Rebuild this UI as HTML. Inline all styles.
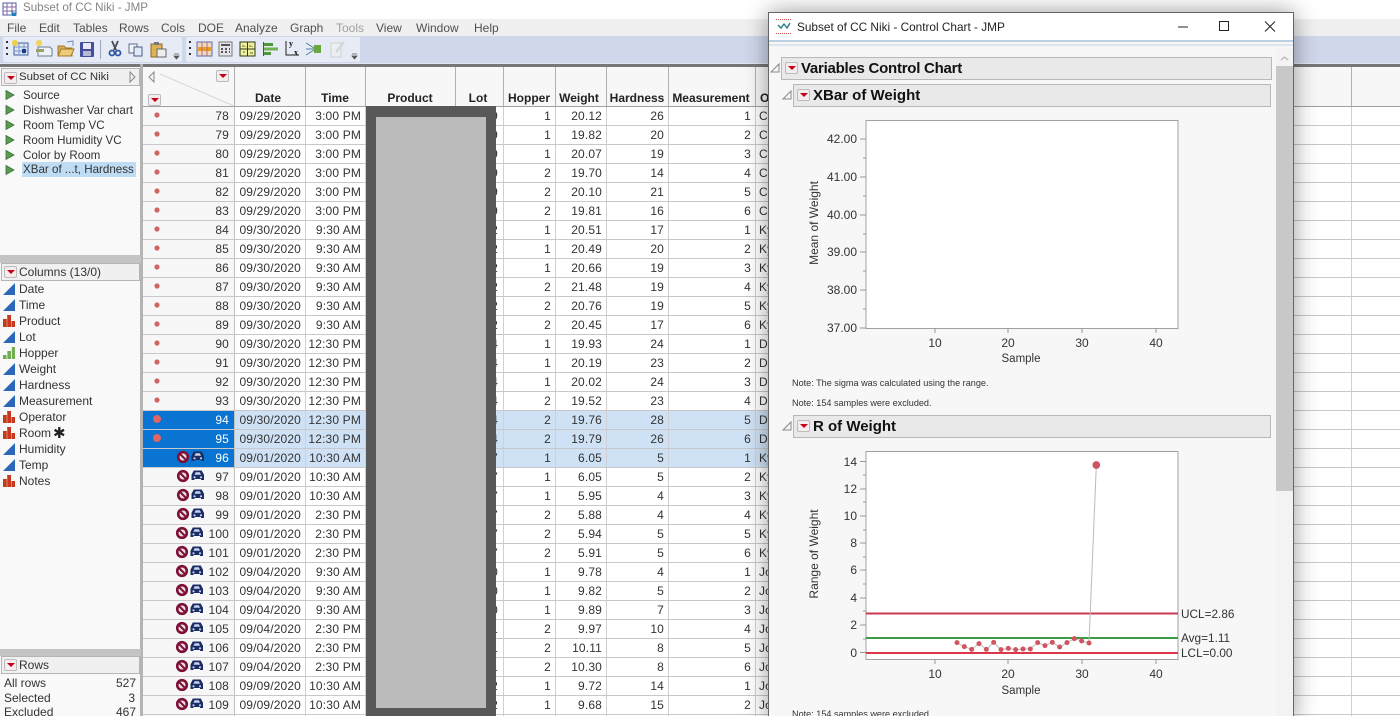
<!DOCTYPE html>
<html><head><meta charset="utf-8"><title>Subset of CC Niki - JMP</title>
<style>
*{box-sizing:border-box;margin:0;padding:0}
html,body{width:1400px;height:716px;overflow:hidden;background:#fff;font-family:"Liberation Sans",sans-serif;font-size:12px;color:#333}
#page{position:relative;width:1400px;height:716px;overflow:hidden;background:#fff}
.a{position:absolute;white-space:nowrap}
#menu{left:0;top:19px;width:1400px;height:17px;background:#f0f0f0}
#menu span{position:absolute;top:2px;color:#505050;font-size:12px}
#tb{left:0;top:36px;width:1400px;height:28px;background:#cfd7ea;border-bottom:1px solid #e4e8f2}
#dk{left:0;top:64px;width:1400px;height:3px;background:#777}
#left{left:0;top:67px;width:141px;height:649px;background:#f9f9f9}
#gap{left:140px;top:64px;width:3px;height:652px;background:#b4b4b4}
.sep{left:0;width:141px;background:#c4c4c4}
.hd{left:1px;width:139px;height:18px;background:#f0f0f0;border:1px solid #b5b5b5;padding:1px 0 0 17px;line-height:15px;color:#333}
.m{position:absolute;width:13px;height:12px;background:#f5eded;border:1px solid #bbb;border-radius:2px}
.m:after{content:"";position:absolute;left:1.500px;top:3px;border:4px solid transparent;border-top:4.500px solid #c40018;border-bottom:0}
.li{left:23px;color:#333;line-height:15px;font-size:11.600px}
.co{left:19px;color:#333;line-height:15px}
#head{left:143px;top:67px;width:1257px;height:40px;background:#f7f7f7;border-bottom:1px solid #a0a0a0}
#head i{position:absolute;top:0;width:1px;height:39px;background:#b0b0b0}
#head b{position:absolute;top:24px;font-size:12px;color:#222;transform:translateX(-50%);white-space:nowrap}
#rows{left:143px;top:107px;width:1257px;height:609px;overflow:hidden}
.r{display:flex;height:19px;border-bottom:1px solid #c8c8cc;background:#fff;line-height:18px;letter-spacing:.15px}
.r span{display:block;height:18px;border-right:1px solid #d0d0d4;text-align:right;padding-right:4px;overflow:hidden;white-space:nowrap;flex:none}
.r span:nth-child(1){width:92px;background:#f7f7f7;padding-right:5px;border-right-color:#c0c0c0}
.r span:nth-child(2){width:71px}
.r span:nth-child(3){width:60px}
.r span:nth-child(4){width:90px}
.r span:nth-child(5){width:48px;padding-right:5px}
.r span:nth-child(6){width:52px}
.r span:nth-child(7){width:51px}
.r span:nth-child(8){width:62px}
.r span:nth-child(9){width:87px}
.r span:nth-child(10){width:596px;text-align:left;padding-left:3px}
.r.s span{background:#cfe2f5}
.r.s span:nth-child(1){background:#0a74d2;color:#fff}
.r.s span:nth-child(10){background:linear-gradient(to right,#cfe2f5 0,#cfe2f5 30px,#fff 30px)}
#bx1{left:366px;top:106px;width:130px;height:610px;background:#585858}
#bx2{left:376px;top:117px;width:110px;height:591px;background:#bbb}
#win{left:768px;top:12px;width:526px;height:710px;background:#f7f7f7;border:1px solid #666;box-shadow:0 0 22px rgba(0,0,0,.4)}
#tit{left:0;top:0;width:524px;height:29px;background:#fff;border-bottom:2px solid #bcd0e2}
#tl{left:0;top:31px;width:524px;height:2px;background:#dce6ef}
.ob{background:#e9e9e9;border:1px solid #b8b8b8;height:23px;font-weight:bold;font-size:15px;color:#111;line-height:21px}
#tk text{font-size:12px;fill:#333}
</style></head><body>
<div id="page">
<div class="a" style="left:23px;top:1px;color:#858585;font-size:11.600px">Subset of CC Niki - JMP</div>
<div class="a" id="menu"><span style="left:7px">File</span><span style="left:39px">Edit</span><span style="left:73px">Tables</span><span style="left:119px">Rows</span><span style="left:161px">Cols</span><span style="left:198px">DOE</span><span style="left:235px">Analyze</span><span style="left:290px">Graph</span><span style="left:336px;color:#a0a0a0">Tools</span><span style="left:376px">View</span><span style="left:416px">Window</span><span style="left:474px">Help</span></div>
<div class="a" id="tb"></div>
<div class="a" id="dk"></div>
<div class="a" id="left"></div>
<div class="a" id="gap"></div>
<div class="a sep" style="top:255px;height:8px"></div>
<div class="a sep" style="top:649px;height:7px"></div>

<div class="a hd" style="top:68px;font-size:11.400px">Subset of CC Niki<span class="m" style="left:2px;top:3px"></span></div>
<div class="a li" style="top:88px">Source</div>
<div class="a li" style="top:103px">Dishwasher Var chart</div>
<div class="a li" style="top:118px">Room Temp VC</div>
<div class="a li" style="top:133px">Room Humidity VC</div>
<div class="a li" style="top:148px">Color by Room</div>
<div class="a li" style="top:162px;left:22px;width:114px;padding-left:1px;background:#bfdcf5">XBar of ...t, Hardness</div>

<div class="a hd" style="top:263px">Columns (13/0)<span class="m" style="left:2px;top:2px"></span></div>
<div class="a co" style="top:282px">Date</div>
<div class="a co" style="top:298px">Time</div>
<div class="a co" style="top:314px">Product</div>
<div class="a co" style="top:330px">Lot</div>
<div class="a co" style="top:346px">Hopper</div>
<div class="a co" style="top:362px">Weight</div>
<div class="a co" style="top:378px">Hardness</div>
<div class="a co" style="top:394px">Measurement</div>
<div class="a co" style="top:410px">Operator</div>
<div class="a co" style="top:426px">Room</div>
<div class="a co" style="top:442px">Humidity</div>
<div class="a co" style="top:458px">Temp</div>
<div class="a co" style="top:474px">Notes</div>
<div class="a" style="left:53px;top:425px;font-size:15px;font-weight:bold;color:#222;line-height:17px;font-family:'DejaVu Sans',sans-serif">✱</div>

<div class="a hd" style="top:656px">Rows<span class="m" style="left:2px;top:2px"></span></div>
<div class="a" style="left:4px;top:676px;color:#333">All rows</div><div class="a" style="right:1264px;top:676px;color:#333">527</div>
<div class="a" style="left:4px;top:691px;color:#333">Selected</div><div class="a" style="right:1265px;top:691px;color:#333">3</div>
<div class="a" style="left:4px;top:705px;color:#333">Excluded</div><div class="a" style="right:1264px;top:705px;color:#333">467</div>

<div class="a" id="head">
<i style="left:91px"></i><i style="left:162px"></i><i style="left:222px"></i><i style="left:312px"></i><i style="left:360px"></i><i style="left:412px"></i><i style="left:463px"></i><i style="left:525px"></i><i style="left:612px"></i><i style="left:1208px"></i>
<b style="left:125px">Date</b><b style="left:192px">Time</b><b style="left:267px">Product</b><b style="left:335px">Lot</b><b style="left:386px">Hopper</b><b style="left:436px">Weight</b><b style="left:494px">Hardness</b><b style="left:568px">Measurement</b><b style="left:617px;transform:none">Operator</b>
<span class="m" style="left:73px;top:3px"></span><span class="m" style="left:5px;top:27px"></span>
</div>

<div class="a" id="rows">
<div class="r"><span>78</span><span>09/29/2020</span><span>3:00 PM</span><span></span><span>9</span><span>1</span><span>20.12</span><span>26</span><span>1</span><span>Ca</span></div>
<div class="r"><span>79</span><span>09/29/2020</span><span>3:00 PM</span><span></span><span>9</span><span>1</span><span>19.82</span><span>20</span><span>2</span><span>Ca</span></div>
<div class="r"><span>80</span><span>09/29/2020</span><span>3:00 PM</span><span></span><span>9</span><span>1</span><span>20.07</span><span>19</span><span>3</span><span>Ca</span></div>
<div class="r"><span>81</span><span>09/29/2020</span><span>3:00 PM</span><span></span><span>9</span><span>2</span><span>19.70</span><span>14</span><span>4</span><span>Ca</span></div>
<div class="r"><span>82</span><span>09/29/2020</span><span>3:00 PM</span><span></span><span>9</span><span>2</span><span>20.10</span><span>21</span><span>5</span><span>Ca</span></div>
<div class="r"><span>83</span><span>09/29/2020</span><span>3:00 PM</span><span></span><span>9</span><span>2</span><span>19.81</span><span>16</span><span>6</span><span>Ca</span></div>
<div class="r"><span>84</span><span>09/30/2020</span><span>9:30 AM</span><span></span><span>2</span><span>1</span><span>20.51</span><span>17</span><span>1</span><span>Ky</span></div>
<div class="r"><span>85</span><span>09/30/2020</span><span>9:30 AM</span><span></span><span>2</span><span>1</span><span>20.49</span><span>20</span><span>2</span><span>Ky</span></div>
<div class="r"><span>86</span><span>09/30/2020</span><span>9:30 AM</span><span></span><span>2</span><span>1</span><span>20.66</span><span>19</span><span>3</span><span>Ky</span></div>
<div class="r"><span>87</span><span>09/30/2020</span><span>9:30 AM</span><span></span><span>2</span><span>2</span><span>21.48</span><span>19</span><span>4</span><span>Ky</span></div>
<div class="r"><span>88</span><span>09/30/2020</span><span>9:30 AM</span><span></span><span>2</span><span>2</span><span>20.76</span><span>19</span><span>5</span><span>Ky</span></div>
<div class="r"><span>89</span><span>09/30/2020</span><span>9:30 AM</span><span></span><span>2</span><span>2</span><span>20.45</span><span>17</span><span>6</span><span>Ky</span></div>
<div class="r"><span>90</span><span>09/30/2020</span><span>12:30 PM</span><span></span><span>4</span><span>1</span><span>19.93</span><span>24</span><span>1</span><span>Da</span></div>
<div class="r"><span>91</span><span>09/30/2020</span><span>12:30 PM</span><span></span><span>4</span><span>1</span><span>20.19</span><span>23</span><span>2</span><span>Da</span></div>
<div class="r"><span>92</span><span>09/30/2020</span><span>12:30 PM</span><span></span><span>4</span><span>1</span><span>20.02</span><span>24</span><span>3</span><span>Da</span></div>
<div class="r"><span>93</span><span>09/30/2020</span><span>12:30 PM</span><span></span><span>4</span><span>2</span><span>19.52</span><span>23</span><span>4</span><span>Da</span></div>
<div class="r s"><span>94</span><span>09/30/2020</span><span>12:30 PM</span><span></span><span>4</span><span>2</span><span>19.76</span><span>28</span><span>5</span><span>Da</span></div>
<div class="r s"><span>95</span><span>09/30/2020</span><span>12:30 PM</span><span></span><span>4</span><span>2</span><span>19.79</span><span>26</span><span>6</span><span>Da</span></div>
<div class="r s"><span>96</span><span>09/01/2020</span><span>10:30 AM</span><span></span><span>7</span><span>1</span><span>6.05</span><span>5</span><span>1</span><span>Ky</span></div>
<div class="r"><span>97</span><span>09/01/2020</span><span>10:30 AM</span><span></span><span>7</span><span>1</span><span>6.05</span><span>5</span><span>2</span><span>Ky</span></div>
<div class="r"><span>98</span><span>09/01/2020</span><span>10:30 AM</span><span></span><span>7</span><span>1</span><span>5.95</span><span>4</span><span>3</span><span>Ky</span></div>
<div class="r"><span>99</span><span>09/01/2020</span><span>2:30 PM</span><span></span><span>7</span><span>2</span><span>5.88</span><span>4</span><span>4</span><span>Ky</span></div>
<div class="r"><span>100</span><span>09/01/2020</span><span>2:30 PM</span><span></span><span>7</span><span>2</span><span>5.94</span><span>5</span><span>5</span><span>Ky</span></div>
<div class="r"><span>101</span><span>09/01/2020</span><span>2:30 PM</span><span></span><span>7</span><span>2</span><span>5.91</span><span>5</span><span>6</span><span>Ky</span></div>
<div class="r"><span>102</span><span>09/04/2020</span><span>9:30 AM</span><span></span><span>0</span><span>1</span><span>9.78</span><span>4</span><span>1</span><span>Jo</span></div>
<div class="r"><span>103</span><span>09/04/2020</span><span>9:30 AM</span><span></span><span>0</span><span>1</span><span>9.82</span><span>5</span><span>2</span><span>Jo</span></div>
<div class="r"><span>104</span><span>09/04/2020</span><span>9:30 AM</span><span></span><span>0</span><span>1</span><span>9.89</span><span>7</span><span>3</span><span>Jo</span></div>
<div class="r"><span>105</span><span>09/04/2020</span><span>2:30 PM</span><span></span><span>1</span><span>2</span><span>9.97</span><span>10</span><span>4</span><span>Jo</span></div>
<div class="r"><span>106</span><span>09/04/2020</span><span>2:30 PM</span><span></span><span>1</span><span>2</span><span>10.11</span><span>8</span><span>5</span><span>Jo</span></div>
<div class="r"><span>107</span><span>09/04/2020</span><span>2:30 PM</span><span></span><span>1</span><span>2</span><span>10.30</span><span>8</span><span>6</span><span>Jo</span></div>
<div class="r"><span>108</span><span>09/09/2020</span><span>10:30 AM</span><span></span><span>2</span><span>1</span><span>9.72</span><span>14</span><span>1</span><span>Jo</span></div>
<div class="r"><span>109</span><span>09/09/2020</span><span>10:30 AM</span><span></span><span>2</span><span>1</span><span>9.68</span><span>15</span><span>2</span><span>Jo</span></div>
<div class="r"><span></span><span></span><span></span><span></span><span></span><span></span><span></span><span></span><span></span><span></span></div>
</div>
<div class="a" id="bx1"></div><div class="a" id="bx2"></div>

<svg class="a" style="left:0;top:0" width="1400" height="716" viewBox="0 0 1400 716">
<defs>
<g id="c"><path d="M0 12L12 0V12Z" fill="#2c66b8"/></g>
<g id="n"><path d="M0 4H3.800V12H0ZM4.200 0H8V12H4.200ZM8.400 6H12V12H8.400Z" fill="#c63a1c"/></g>
<g id="o"><path d="M0 8H3.600V12H0ZM4.400 4H8V12H4.400ZM8.800 0H12V12H8.800Z" fill="#6fae52"/></g>
<path id="g" d="M0 0L8 4.500L0 9Z" fill="#5c9a4e" stroke="#35703a" stroke-width=".8"/>
<g id="x"><circle r="4.800" fill="#ecdfe3" stroke="#7c1036" stroke-width="2.600"/><path d="M-3-3L3 3" stroke="#7c1036" stroke-width="2"/><path d="M8.500 4V-1.200L10.800-5.500H18.700L21-1.200V4H18V3H11.500V4Z" fill="#1c2c66"/><path d="M11.500-1.200L12.600-3.800H16.900L18-1.200Z" fill="#c9d3ea"/><circle cx="11.500" cy="1.300" r="1.100" fill="#c9d3ea"/><circle cx="18" cy="1.300" r="1.100" fill="#c9d3ea"/></g>
</defs>
<!-- title icon -->
<g fill="none"><rect x="3" y="3" width="13" height="12" fill="#fff" stroke="#4a5aa0"/><path d="M3 7H16M3 11H16M7 3V15M12 3V15" stroke="#8a6aa8"/><path d="M11 10l3 3 2-1v4h-4z" fill="#1c7ec0"/></g>
<!-- toolbar -->
<rect x="3" y="37" width="179" height="25" rx="2" fill="#e6ebf5"/><rect x="186" y="37" width="174" height="25" rx="2" fill="#e6ebf5"/>
<g fill="#333"><rect x="6" y="41" width="2" height="2"/><rect x="6" y="47" width="2" height="2"/><rect x="6" y="53" width="2" height="2"/><rect x="189" y="41" width="2" height="2"/><rect x="189" y="47" width="2" height="2"/><rect x="189" y="53" width="2" height="2"/></g>
<rect x="14" y="43" width="14" height="12" fill="#dfe7f4" stroke="#3d62a8"/><path d="M14 47H28M14 51H28M19 43V55M24 43V55" stroke="#7d97c8"/><circle cx="15" cy="43" r="3" fill="#f0d040"/><rect x="22" y="49" width="4" height="4" fill="#1c3f86"/>
<path d="M38 47H50L52 49V56H38Z" fill="#eef2f7" stroke="#6b7d95"/><circle cx="39" cy="43" r="3.200" fill="#efd460"/><rect x="36" y="49" width="8" height="3" fill="#9aa06a"/>
<path d="M58 46H64L66 48H72V56H58Z" fill="#dcae52" stroke="#a57a2c"/><path d="M61 49H74L71 56H58Z" fill="#eccb7a" stroke="#a57a2c"/><path d="M67 42L73 41V46" stroke="#6f8db8" fill="none"/>
<rect x="80" y="42" width="14" height="15" rx="1" fill="#414f9e"/><rect x="83" y="43" width="8" height="6" fill="#e8ebf5"/><rect x="83" y="51" width="8" height="5" fill="#b3bad6"/>
<rect x="100" y="40" width="1" height="19" fill="#9aa5bd"/>
<path d="M112 41L116 50M118 41L114 50" stroke="#4a4a52" stroke-width="1.800"/><circle cx="112" cy="53" r="2.500" fill="none" stroke="#2f56a0" stroke-width="1.800"/><circle cx="118" cy="53" r="2.500" fill="none" stroke="#2f56a0" stroke-width="1.800"/>
<rect x="129" y="44" width="8" height="9" fill="#f2f4f8" stroke="#5c6c88"/><rect x="134" y="47" width="8" height="9" fill="#e3e9f5" stroke="#46608f"/>
<rect x="151" y="44" width="11" height="13" fill="#dcb253" stroke="#8b6a2b"/><rect x="154" y="42" width="5" height="3" fill="#777"/><rect x="157" y="49" width="9" height="8" fill="#eee" stroke="#666"/>
<path d="M174 54H179M174 56H179L176.500 59Z" stroke="#555" fill="#555" stroke-width=".8"/>
<rect x="197" y="42" width="15" height="14" fill="#f1d7c2" stroke="#5a6fa8"/><rect x="197" y="47" width="15" height="4" fill="#ec9a22"/><path d="M202 42V56M207 42V56" stroke="#a77"/>
<rect x="219" y="42" width="13" height="14" fill="#e4e6ea" stroke="#777"/><rect x="221" y="44" width="9" height="2" fill="#555"/><path d="M221 49h2M225 49h2M221 52h2M225 52h2M229 49h1M229 52h1" stroke="#555" stroke-width="2"/>
<rect x="240" y="42" width="15" height="14" fill="#f1ef9e" stroke="#2e3a20"/><path d="M247.500 42V56M240 49H255" stroke="#2e3a20"/><path d="M243 45v2M245 46v1M250 45v2M252 46v1M243 52h2M250 53h3" stroke="#4a7a28"/>
<path d="M263.500 42V56" stroke="#2d6a28"/><rect x="264" y="43" width="9" height="3" fill="#4d9a38"/><rect x="264" y="47.500" width="14" height="3" fill="#73b050"/><rect x="264" y="52" width="7" height="3" fill="#4d9a38"/>
<path d="M286 41V55H299" fill="none" stroke="#222"/><text x="289" y="46" font-size="8" font-weight="bold" font-family="Liberation Serif" fill="#111">y</text><text x="294" y="55" font-size="8" font-weight="bold" font-family="Liberation Serif" fill="#111">x</text>
<rect x="314" y="45" width="7" height="8" fill="#6aa83e"/><path d="M306 43L314 48M306 55L314 50M306 49H314" stroke="#4e7f9a" fill="none"/>
<rect x="331" y="43" width="10" height="14" fill="#eceef0" stroke="#cfd2d6"/><path d="M336 52L344 42" stroke="#d3d6da" stroke-width="2.500"/>
<path d="M352 54H357M352 56H357L354.500 59Z" stroke="#555" fill="#555" stroke-width=".8"/>
<!-- outline triangles -->
<use href="#g" x="6" y="90.500"/><use href="#g" x="6" y="105.500"/><use href="#g" x="6" y="120.500"/><use href="#g" x="6" y="135.500"/><use href="#g" x="6" y="150.500"/><use href="#g" x="6" y="165.500"/>
<path d="M130 72L135 77L130 82Z" fill="none" stroke="#888"/>
<!-- column icons -->
<use href="#c" x="3" y="283"/><use href="#c" x="3" y="299"/><use href="#n" x="3" y="315"/><use href="#c" x="3" y="331"/><use href="#o" x="3" y="347"/><use href="#c" x="3" y="363"/><use href="#c" x="3" y="379"/><use href="#c" x="3" y="395"/><use href="#n" x="3" y="411"/><use href="#n" x="3" y="427"/><use href="#c" x="3" y="443"/><use href="#c" x="3" y="459"/><use href="#n" x="3" y="475"/>
<!-- corner -->
<path d="M160 74L234 106" stroke="#d8d8d8"/><path d="M154 72L149 77L154 82Z" fill="#f4f4f4" stroke="#888"/>
<!-- row dots -->
<g fill="#cf6666"><circle cx="157" cy="115" r="2.600"/><circle cx="157" cy="134" r="2.600"/><circle cx="157" cy="153" r="2.600"/><circle cx="157" cy="172" r="2.600"/><circle cx="157" cy="191" r="2.600"/><circle cx="157" cy="210" r="2.600"/><circle cx="157" cy="229" r="2.600"/><circle cx="157" cy="248" r="2.600"/><circle cx="157" cy="267" r="2.600"/><circle cx="157" cy="286" r="2.600"/><circle cx="157" cy="305" r="2.600"/><circle cx="157" cy="324" r="2.600"/><circle cx="157" cy="343" r="2.600"/><circle cx="157" cy="362" r="2.600"/><circle cx="157" cy="381" r="2.600"/><circle cx="157" cy="400" r="2.600"/><circle cx="157" cy="419" r="4" fill="#e06560"/><circle cx="157" cy="438" r="4" fill="#e06560"/></g>
<use href="#x" x="183" y="457"/><use href="#x" x="183" y="476"/><use href="#x" x="183" y="495"/><use href="#x" x="183" y="514"/><use href="#x" x="182" y="533"/><use href="#x" x="182" y="552"/><use href="#x" x="182" y="571"/><use href="#x" x="182" y="590"/><use href="#x" x="182" y="609"/><use href="#x" x="182" y="628"/><use href="#x" x="182" y="647"/><use href="#x" x="182" y="666"/><use href="#x" x="182" y="685"/><use href="#x" x="182" y="704"/>
</svg>

<div class="a" id="win">
<div class="a" id="tit"></div><div class="a" id="tl"></div>
<div class="a" style="left:28px;top:7px;font-size:11.800px;color:#222">Subset of CC Niki - Control Chart - JMP</div>
<div class="a" style="left:507px;top:35px;width:17px;height:675px;background:#f3f3f3"></div>
<div class="a" style="left:507px;top:53px;width:17px;height:425px;background:#c8c8c8"></div>
<div class="a ob" style="left:12px;top:44px;width:491px;padding-left:19px;letter-spacing:-.25px">Variables Control Chart</div>
<div class="a ob" style="left:24px;top:71px;width:478px;padding-left:19px">XBar of Weight</div>
<div class="a ob" style="left:24px;top:402px;width:478px;padding-left:19px">R of Weight</div>
<span class="m" style="left:16px;top:49px"></span><span class="m" style="left:28px;top:76px"></span><span class="m" style="left:28px;top:407px"></span>
</div>

<svg class="a" id="tk" style="left:0;top:0" width="1400" height="716" viewBox="0 0 1400 716">
<path d="M771 72H779V64Z" fill="none" stroke="#888"/>
<path d="M783 99H791V91Z M783 430H791V422Z" fill="none" stroke="#888"/>
<!-- window controls -->
<path d="M1178 27H1188" stroke="#222" stroke-width="1"/><rect x="1219.500" y="21.500" width="9" height="9" fill="none" stroke="#222"/><path d="M1265 21.500L1275 31.500M1275 21.500L1265 31.500" stroke="#222"/>
<path d="M778 25L781 28L784 24L787 28L790 23" fill="none" stroke="#2a7a88" stroke-width="1.400"/><path d="M776 19.500H792M776 33.500H792" stroke="#c05050" stroke-dasharray="1 1"/>
<path d="M1281 60L1284.500 57L1288 60" fill="none" stroke="#aaa"/>
<!-- XBar chart -->
<rect x="866" y="120.500" width="312" height="208" fill="#fff" stroke="#a0a0a0"/>
<path d="M860 139H866M860 177H866M860 215H866M860 252H866M860 290H866M860 328H866M863 158H866M863 196H866M863 234H866M863 271H866M863 309H866M935 328V333M1008 328V333M1082 328V333M1156 328V333" stroke="#999"/>
<g text-anchor="end"><text x="857" y="143">42.00</text><text x="857" y="181">41.00</text><text x="857" y="219">40.00</text><text x="857" y="256">39.00</text><text x="857" y="294">38.00</text><text x="857" y="332">37.00</text></g>
<g text-anchor="middle"><text x="935" y="347">10</text><text x="1008" y="347">20</text><text x="1082" y="347">30</text><text x="1156" y="347">40</text><text x="1021" y="362" style="font-size:11.500px">Sample</text>
<text transform="translate(818 223) rotate(-90)">Mean of Weight</text></g>
<text x="792" y="386" style="font-size:9.100px">Note: The sigma was calculated using the range.</text>
<text x="792" y="406" style="font-size:9.100px">Note: 154 samples were excluded.</text>
<!-- R chart -->
<rect x="866" y="451.500" width="312" height="208" fill="#fff" stroke="#a0a0a0"/>
<path d="M860 461.500H866M860 489H866M860 516H866M860 543H866M860 570H866M860 598H866M860 625H866M860 652.500H866M863 475H866M863 502H866M863 530H866M863 557H866M863 584H866M863 611H866M863 639H866M935 659V664M1008 659V664M1082 659V664M1156 659V664" stroke="#999"/>
<g text-anchor="end"><text x="857" y="466">14</text><text x="857" y="493">12</text><text x="857" y="520">10</text><text x="857" y="547">8</text><text x="857" y="574">6</text><text x="857" y="602">4</text><text x="857" y="629">2</text><text x="857" y="657">0</text></g>
<g text-anchor="middle"><text x="935" y="678">10</text><text x="1008" y="678">20</text><text x="1082" y="678">30</text><text x="1156" y="678">40</text><text x="1021" y="694" style="font-size:11.500px">Sample</text>
<text transform="translate(818 554) rotate(-90)">Range of Weight</text></g>
<rect x="866" y="612.500" width="312" height="2" fill="#c83a50"/>
<rect x="866" y="637" width="312" height="2" fill="#3c9a46"/>
<rect x="866" y="652" width="312" height="2" fill="#dc3848"/>
<text x="1181" y="618" style="font-size:11.800px">UCL=2.86</text><text x="1181" y="642" style="font-size:11.800px">Avg=1.11</text><text x="1181" y="657" style="font-size:11.800px">LCL=0.00</text>
<g transform="translate(780 410) scale(.33333)">
<polyline points="531,698 553,710 575,718 597,701 619,718 641,697 663,719 685,715 707,719 729,717 751,717 773,698 795,707 817,697 839,711 861,698 883,686 905,693 927,699 949,165" fill="none" stroke="#bbb" stroke-width="3"/>
<g fill="#cf5560"><circle cx="531" cy="698" r="7.500"/><circle cx="553" cy="710" r="7.500"/><circle cx="575" cy="718" r="7.500"/><circle cx="597" cy="701" r="7.500"/><circle cx="619" cy="718" r="7.500"/><circle cx="641" cy="697" r="7.500"/><circle cx="663" cy="719" r="7.500"/><circle cx="685" cy="715" r="7.500"/><circle cx="707" cy="719" r="7.500"/><circle cx="729" cy="717" r="7.500"/><circle cx="751" cy="717" r="7.500"/><circle cx="773" cy="698" r="7.500"/><circle cx="795" cy="707" r="7.500"/><circle cx="817" cy="697" r="7.500"/><circle cx="839" cy="711" r="7.500"/><circle cx="861" cy="698" r="7.500"/><circle cx="883" cy="686" r="7.500"/><circle cx="905" cy="693" r="7.500"/><circle cx="927" cy="699" r="7.500"/><circle cx="949" cy="165" r="11.500"/></g>
</g>
<text x="792" y="717" style="font-size:9.100px">Note: 154 samples were excluded.</text>
</svg>
</div>
</body></html>
